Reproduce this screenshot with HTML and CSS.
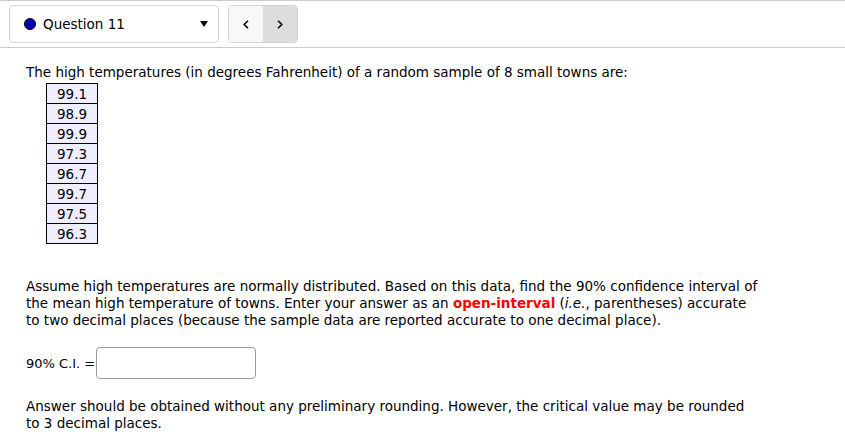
FILE: index.html
```html
<!DOCTYPE html>
<html>
<head>
<meta charset="utf-8">
<link rel="stylesheet" href="styles.css">
</head>
<body>
<div class="topbar">
  <div class="qselect">
    <span class="dot"></span>
    <span class="qlabel">Question 11</span>
    <span class="caret"></span>
  </div>
  <div class="nav">
    <button class="navbtn prev" aria-label="Previous"><svg width="6" height="9" viewBox="0 0 6 9"><polyline points="5,0.8 1.2,4.5 5,8.2" fill="none" stroke="#000" stroke-width="1.6"/></svg></button>
    <button class="navbtn next" aria-label="Next"><svg width="6" height="9" viewBox="0 0 6 9"><polyline points="1,0.8 4.8,4.5 1,8.2" fill="none" stroke="#000" stroke-width="1.6"/></svg></button>
  </div>
</div>
<div class="question">
  <p class="intro">The high temperatures (in degrees Fahrenheit) of a random sample of 8 small towns are:</p>
  <table class="data">
    <tr><td>99.1</td></tr>
    <tr><td>98.9</td></tr>
    <tr><td>99.9</td></tr>
    <tr><td>97.3</td></tr>
    <tr><td>96.7</td></tr>
    <tr><td>99.7</td></tr>
    <tr><td>97.5</td></tr>
    <tr><td>96.3</td></tr>
  </table>
  <p class="para">Assume high temperatures are normally distributed. Based on this data, find the 90% confidence interval of the mean high temperature of towns. Enter your answer as an <span class="red">open-interval</span> (<i>i.e.</i>, parentheses) accurate to two decimal places (because the sample data are reported accurate to one decimal place).</p>
  <div class="answer">
    <span class="anslabel">90% C.I. =</span>
    <input class="ansbox" type="text">
  </div>
  <p class="para last">Answer should be obtained without any preliminary rounding. However, the critical value may be rounded to 3 decimal places.</p>
</div>
</body>
</html>
```

FILE: styles.css
```css
html, body {
  margin: 0;
  padding: 0;
  background: #fff;
}
body {
  font-family: "DejaVu Sans", Verdana, sans-serif;
  font-size: 13.5px;
  color: #000;
}
.topbar {
  display: flex;
  align-items: center;
  gap: 9px;
  height: 46px;
  padding-left: 9px;
  border-top: 1px solid #cccccc;
  border-bottom: 1px solid #cccccc;
}
.qselect {
  display: flex;
  align-items: center;
  box-sizing: border-box;
  width: 210px;
  height: 38px;
  border: 1px solid #d4d4d4;
  border-radius: 4px;
  padding: 0 10px 0 14px;
  font-size: 13.5px;
}
.dot {
  width: 10px;
  height: 10px;
  border-radius: 50%;
  background: #0000b0;
  border: 1px solid #000;
  margin-right: 7px;
}
.qlabel {
  flex: 1;
}
.caret {
  width: 0;
  height: 0;
  border-left: 4px solid transparent;
  border-right: 4px solid transparent;
  border-top: 6px solid #000;
}
.nav {
  display: flex;
  box-sizing: border-box;
  height: 38px;
  border: 1px solid #d4d4d4;
  border-radius: 4px;
  overflow: hidden;
}
.navbtn {
  display: flex;
  align-items: center;
  justify-content: center;
  border: 0;
  margin: 0;
  padding: 0;
  width: 34px;
  height: 36px;
  background: #f8f8f8;
}
.navbtn.next {
  background: #dcdcdc;
}
.question {
  padding: 16px 0 0 26px;
  width: 736px;
}
.intro {
  margin: 0;
  line-height: 16px;
}
.data {
  border-collapse: collapse;
  margin: 3px 0 0 20px;
}
.data td {
  border: 1px solid #000;
  background: #eeeeff;
  width: 50px;
  height: 19px;
  padding: 0;
  text-align: center;
  line-height: 18px;
}
.para {
  margin: 34px 0 0 0;
  line-height: 17px;
}
.answer {
  display: flex;
  align-items: center;
  gap: 1px;
  margin-top: 18px;
}
.anslabel {
  font-size: 13px;
}
.ansbox {
  box-sizing: border-box;
  width: 160px;
  height: 32px;
  border: 1px solid #9a9a9a;
  border-radius: 4px;
  margin: 0;
}
.para.last {
  margin-top: 19px;
}
.red {
  color: #ff0000;
  font-weight: bold;
}
```
